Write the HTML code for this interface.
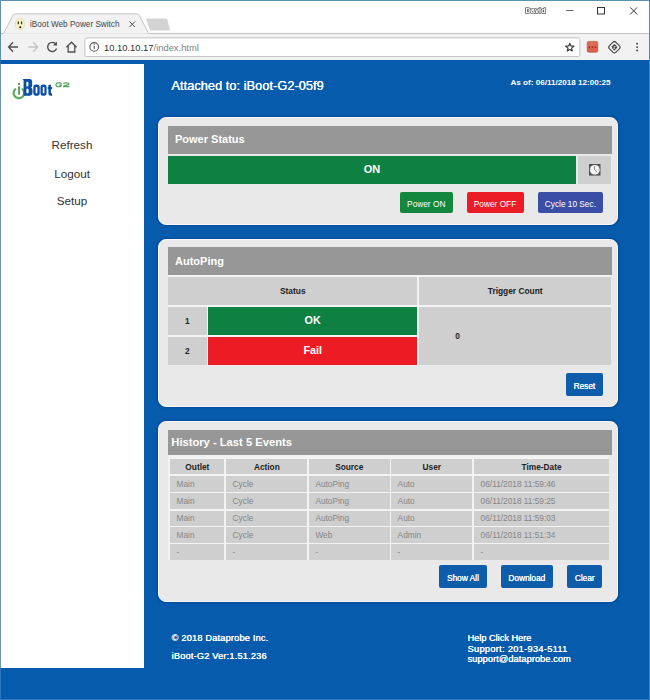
<!DOCTYPE html>
<html><head><meta charset="utf-8"><title>iBoot Web Power Switch</title>
<style>
html,body{margin:0;padding:0;width:650px;height:700px;overflow:hidden;background:#fff;}
body{position:relative;font-family:"Liberation Sans",sans-serif;}
.r{position:absolute;}
.t{position:absolute;white-space:nowrap;line-height:1;}
.emb{text-shadow:0.35px 0 0 currentColor;}
.emb2{text-shadow:0.25px 0 0 currentColor;}
.card{position:absolute;box-sizing:border-box;background:#e9e9ea;border:1.5px solid #f8f8f8;border-radius:8px;box-shadow:0 0 2px 0.5px #004a9c;}
</style></head><body>
<div class="r" style="left:0px;top:0px;width:650.00px;height:33.00px;background:#ffffff;"></div>
<div class="r" style="left:0px;top:33px;width:650.00px;height:27.00px;background:#f2f2f2;"></div>
<div class="r" style="left:0px;top:33px;width:650.00px;height:1.00px;background:#c9c9c9;"></div>
<svg class="r" style="left:0;top:0" width="650" height="60" viewBox="0 0 650 60">
<path d="M3.5 33.5 L13.2 14.8 Q14 13.9 15.5 13.9 L137 13.9 Q138.6 13.9 139.2 14.9 L148.5 33.5" fill="#f2f2f2" stroke="#c6c6c6" stroke-width="1"/>
<rect x="0" y="33.4" width="650" height="0.6" fill="#f2f2f2"/>
<path d="M3.5 33.5 L0 33.5 M148.5 33.5 L650 33.5" stroke="#c3c3c3" stroke-width="1"/>
<path d="M147 18.5 L165 18.5 Q166.5 18.5 167.3 19.6 L170 29.5 Q170.3 30.5 169 30.5 L151.5 30.5 Q150.3 30.5 149.8 29.5 L146.4 19.6 Q146 18.5 147 18.5 Z" fill="#d3d3d3"/>
<!-- favicon -->
<ellipse cx="19.9" cy="24" rx="4.6" ry="5.6" fill="#f6f1c6" stroke="#ddd6a0" stroke-width="0.6"/>
<rect x="17.7" y="21.2" width="1.3" height="3.1" rx="0.6" fill="#3a3a20"/>
<rect x="20.9" y="21.2" width="1.3" height="3.1" rx="0.6" fill="#3a3a20"/>
<circle cx="20.3" cy="27.3" r="1" fill="#111"/>
<!-- tab close -->
<path d="M129.5 21.5 L135 27 M135 21.5 L129.5 27" stroke="#444" stroke-width="0.95"/>
<!-- window controls -->
<path d="M566 10.5 L573.5 10.5" stroke="#666" stroke-width="1"/>
<rect x="597.5" y="7.5" width="7" height="6.5" fill="none" stroke="#333" stroke-width="1"/>
<path d="M630.2 7.4 L637.2 14.4 M637.2 7.4 L630.2 14.4" stroke="#222" stroke-width="0.9"/>
<!-- nav icons -->
<path d="M8.8 47 L18 47 M13 42.2 L8.6 47 L13 51.8" fill="none" stroke="#505050" stroke-width="1.4"/>
<path d="M37.4 47 L28.2 47 M33.2 42.2 L37.6 47 L33.2 51.8" fill="none" stroke="#c4c4c4" stroke-width="1.4"/>
<path d="M56 44.2 A4.6 4.6 0 1 0 56.6 48.6" fill="none" stroke="#505050" stroke-width="1.4"/>
<path d="M57 41.6 L57 45.6 L53 45.6 Z" fill="#505050"/>
<path d="M66.4 47.2 L71.5 42.2 L76.6 47.2 M68.2 45.8 L68.2 52 L74.8 52 L74.8 45.8" fill="none" stroke="#505050" stroke-width="1.3"/>
<!-- address bar -->
<rect x="84.9" y="37.9" width="495" height="18.6" rx="1.5" fill="#fff" stroke="#bdbdbd" stroke-width="0.9"/>
<circle cx="94.2" cy="46.9" r="4.3" fill="none" stroke="#555" stroke-width="1.1"/>
<rect x="93.65" y="45.8" width="1.1" height="3.4" fill="#555"/>
<rect x="93.65" y="43.9" width="1.1" height="1.1" fill="#555"/>
<!-- star -->
<path d="M569.8 43.4 L570.9 46 L573.9 46.2 L571.6 48.1 L572.3 51 L569.8 49.4 L567.3 51 L568 48.1 L565.7 46.2 L568.7 46 Z" fill="none" stroke="#3c3c3c" stroke-width="1.2" stroke-linejoin="round"/>
<!-- red ext -->
<rect x="587.2" y="41.4" width="10.6" height="10.8" rx="1.4" fill="#d8604c" stroke="#b4493a" stroke-width="0.6"/>
<rect x="587.8" y="42" width="9.4" height="3.6" rx="1" fill="#e57a62" opacity="0.55"/>
<circle cx="589.4" cy="47.3" r="0.7" fill="#8a2414"/><circle cx="592.4" cy="47.3" r="0.7" fill="#8a2414"/><circle cx="595.4" cy="47.3" r="0.7" fill="#8a2414"/>
<!-- diamond ext -->
<path d="M612.8 42.3 Q614.4 40.7 616 42.3 L619.3 45.6 Q620.9 47.2 619.3 48.8 L616 52.1 Q614.4 53.7 612.8 52.1 L609.5 48.8 Q607.9 47.2 609.5 45.6 Z" fill="none" stroke="#4a4a4a" stroke-width="1.2"/>
<path d="M611.7 47.2 L614.4 44.5 L616.3 46.4 L614.6 48 M617.1 47.2 L614.4 49.9 L612.5 48 L614.2 46.4" fill="none" stroke="#4a4a4a" stroke-width="1.05" stroke-linejoin="round"/>
<!-- menu dots -->
<circle cx="637.1" cy="43.8" r="0.95" fill="#444"/><circle cx="637.1" cy="47.1" r="0.95" fill="#444"/><circle cx="637.1" cy="50.5" r="0.95" fill="#444"/>
</svg>
<div class="t " style="left:30.00px;top:21.36px;font-size:8.2px;color:#444;">iBoot Web Power Switch</div>
<svg class="r" style="left:520px;top:3px;filter:blur(0.3px)" width="32" height="16" viewBox="520 3 32 16"><text x="535.6" y="13.3" text-anchor="middle" font-family="Liberation Sans" font-weight="bold" font-size="7.4" fill="#fff" stroke="#666" stroke-width="1.7" stroke-linejoin="round" paint-order="stroke">David</text></svg>
<div class="t " style="left:104.00px;top:42.64px;font-size:9.4px;color:#333;">10.10.10.17<span style="color:#808080">/index.html</span></div>
<div class="r" style="left:0px;top:60px;width:650.00px;height:640.00px;background:#065bad;"></div>
<div class="r" style="left:1px;top:64px;width:143.00px;height:604.00px;background:#ffffff;"></div>
<div class="t " style="left:72.00px;top:139.00px;font-size:11.7px;color:#333;transform:translateX(-50%);">Refresh</div>
<div class="t " style="left:72.00px;top:167.70px;font-size:11.7px;color:#333;transform:translateX(-50%);">Logout</div>
<div class="t " style="left:72.00px;top:195.30px;font-size:11.7px;color:#333;transform:translateX(-50%);">Setup</div>
<svg class="r" style="left:0;top:70px" width="80" height="40" viewBox="0 70 80 40">
<path d="M15.9 88.7 A5.3 5.3 0 1 0 21.9 88.7" fill="none" stroke="#5aae60" stroke-width="2.2"/>
<rect x="18.1" y="86.2" width="1.9" height="8.4" fill="#4f9e58"/>
<rect x="18.1" y="83.1" width="1.9" height="1.8" fill="#5b7a60"/>
<path fill-rule="evenodd" fill="#0b4fa2" d="M22.7 79 H29.6 Q32.2 79 32.2 82.2 V85.6 Q32.2 87.1 31.1 87.5 Q32.5 88 32.5 90.2 V92.6 Q32.5 95.7 29.6 95.7 H23.6 V80.3 Q23.6 79.6 22.7 79.6 Z M26.4 81.7 V86.5 H27.6 Q28.4 86.5 28.4 85.7 V82.5 Q28.4 81.7 27.6 81.7 Z M26.4 88.8 V93.2 H27.8 Q28.6 93.2 28.6 92.4 V89.6 Q28.6 88.8 27.8 88.8 Z"/>
<path fill-rule="evenodd" fill="#0b4fa2" d="M35.8 84.6 H37.2 Q39.7 84.6 39.7 87.2 V93.1 Q39.7 95.7 37.2 95.7 H35.8 Q33.3 95.7 33.3 93.1 V87.2 Q33.3 84.6 35.8 84.6 Z M36.1 87 Q35.6 87 35.6 87.6 V92.7 Q35.6 93.3 36.1 93.3 H36.9 Q37.4 93.3 37.4 92.7 V87.6 Q37.4 87 36.9 87 Z"/>
<path fill-rule="evenodd" fill="#0b4fa2" d="M43 84.6 H44.1 Q46.6 84.6 46.6 87.2 V93.1 Q46.6 95.7 44.1 95.7 H43 Q40.5 95.7 40.5 93.1 V87.2 Q40.5 84.6 43 84.6 Z M43.3 87 Q42.8 87 42.8 87.6 V92.7 Q42.8 93.3 43.3 93.3 H43.9 Q44.4 93.3 44.4 92.7 V87.6 Q44.4 87 43.9 87 Z"/>
<path fill="#0b4fa2" d="M48.4 85.1 L50.9 84.6 V87.1 H52.1 V89.2 H50.9 V92.6 Q50.9 93.4 51.6 93.4 H52.1 V95.7 H50.6 Q48.4 95.7 48.4 93.4 V89.2 H47.7 V87.1 H48.4 Z"/>
<path d="M61.35 84.1 Q61.35 82.85 59.5 82.85 H57.9 Q56.05 82.85 56.05 84.4 V85 Q56.05 86.55 57.9 86.55 H59.5 Q61.35 86.55 61.35 85.3 V85.1 H59.1" fill="none" stroke="#55a862" stroke-width="1.3"/>
<path d="M63.65 84.1 Q63.65 82.85 65.5 82.85 H67 Q68.85 82.85 68.85 84 Q68.85 84.9 67 85.2 L65.2 85.5 Q63.65 85.8 63.65 86.55 H69.5" fill="none" stroke="#55a862" stroke-width="1.3"/>
</svg>
<div class="t emb" style="left:171.30px;top:79.85px;font-size:12.7px;color:#fff;letter-spacing:0.08px;">Attached to: iBoot-G2-05f9</div>
<div class="t " style="left:510.50px;top:79.14px;font-size:8.1px;color:#fff;font-weight:bold;">As of: 06/11/2018 12:00:25</div>
<div class="card" style="left:158px;top:117px;width:460px;height:108px;"></div>
<div class="r" style="left:168px;top:126px;width:444.00px;height:27.50px;background:#979797;"></div>
<div class="t " style="left:175.00px;top:134.29px;font-size:11px;color:#fff;font-weight:bold;">Power Status</div>
<div class="r" style="left:168px;top:156px;width:408.00px;height:28.00px;background:#0e8041;"></div>
<div class="t " style="left:372.00px;top:163.69px;font-size:11px;color:#fff;font-weight:bold;transform:translateX(-50%);">ON</div>
<div class="r" style="left:578px;top:156px;width:33.00px;height:28.00px;background:#cfcfcf;"></div>
<svg class="r" style="left:588.5px;top:164px" width="12" height="12" viewBox="0 0 12 12">
<rect x="0" y="0" width="11.5" height="11.6" fill="#555"/>
<circle cx="5.8" cy="5.8" r="4.9" fill="#f6f6f6"/>
<path d="M5.8 1.8 V2.8 M5.8 8.8 V9.8 M1.8 5.8 H2.8 M8.8 5.8 H9.8" stroke="#999" stroke-width="0.6"/>
<path d="M5.3 2.4 L5.6 5.9 L8 7.8" fill="none" stroke="#666" stroke-width="0.75"/>
</svg>
<div class="r" style="left:400px;top:192px;width:52.50px;height:21.00px;background:#13873f;border-radius:2px;"></div>
<div class="t " style="left:426.25px;top:199.97px;font-size:8.3px;color:#fff;transform:translateX(-50%);">Power ON</div>
<div class="r" style="left:466.5px;top:192px;width:57.10px;height:21.00px;background:#ec1c26;border-radius:2px;"></div>
<div class="t " style="left:495.05px;top:199.97px;font-size:8.3px;color:#fff;transform:translateX(-50%);">Power OFF</div>
<div class="r" style="left:537.6px;top:192px;width:65.50px;height:21.00px;background:#3a4ea6;border-radius:2px;"></div>
<div class="t " style="left:570.35px;top:199.97px;font-size:8.3px;color:#fff;transform:translateX(-50%);">Cycle 10 Sec.</div>
<div class="card" style="left:158px;top:238.5px;width:460px;height:168.5px;"></div>
<div class="r" style="left:168px;top:247px;width:444.00px;height:28.30px;background:#979797;"></div>
<div class="t " style="left:175.00px;top:255.89px;font-size:11px;color:#fff;font-weight:bold;">AutoPing</div>
<div class="r" style="left:168px;top:275.3px;width:443.00px;height:89.70px;background:#f3f3f3;"></div>
<div class="r" style="left:168px;top:277px;width:249.30px;height:28.30px;background:#cfcfcf;"></div>
<div class="r" style="left:419px;top:277px;width:192.00px;height:28.30px;background:#cfcfcf;"></div>
<div class="t " style="left:292.80px;top:287.19px;font-size:8.4px;color:#222;font-weight:bold;transform:translateX(-50%);">Status</div>
<div class="t " style="left:515.20px;top:287.19px;font-size:8.4px;color:#222;font-weight:bold;transform:translateX(-50%);">Trigger Count</div>
<div class="r" style="left:168px;top:307px;width:39.00px;height:27.80px;background:#cfcfcf;"></div>
<div class="r" style="left:208px;top:307px;width:209.30px;height:27.80px;background:#0e8041;"></div>
<div class="r" style="left:168px;top:336.8px;width:39.00px;height:28.00px;background:#cfcfcf;"></div>
<div class="r" style="left:208px;top:336.8px;width:209.30px;height:28.00px;background:#ed1c24;"></div>
<div class="r" style="left:419px;top:307px;width:192.00px;height:57.80px;background:#cfcfcf;"></div>
<div class="t " style="left:187.30px;top:316.97px;font-size:8.3px;color:#222;font-weight:bold;transform:translateX(-50%);">1</div>
<div class="t " style="left:187.30px;top:346.87px;font-size:8.3px;color:#222;font-weight:bold;transform:translateX(-50%);">2</div>
<div class="t " style="left:312.70px;top:315.46px;font-size:10.8px;color:#fff;font-weight:bold;transform:translateX(-50%);">OK</div>
<div class="t " style="left:312.70px;top:344.86px;font-size:10.8px;color:#fff;font-weight:bold;transform:translateX(-50%);">Fail</div>
<div class="t " style="left:457.60px;top:331.97px;font-size:8.3px;color:#222;font-weight:bold;transform:translateX(-50%);">0</div>
<div class="r" style="left:565.5px;top:373px;width:37.60px;height:22.80px;background:#0d5dab;border-radius:2px;"></div>
<div class="t emb2" style="left:584.30px;top:381.77px;font-size:8.3px;color:#fff;transform:translateX(-50%);">Reset</div>
<div class="card" style="left:158px;top:421px;width:460px;height:180.79999999999995px;"></div>
<div class="r" style="left:168px;top:430px;width:444.00px;height:25.20px;background:#979797;"></div>
<div class="t " style="left:171.30px;top:436.92px;font-size:11.2px;color:#fff;font-weight:bold;">History - Last 5 Events</div>
<div class="r" style="left:168px;top:455.2px;width:441.00px;height:104.60px;background:#f3f3f3;"></div>
<div class="r" style="left:170.2px;top:458.6px;width:54.30px;height:15.50px;background:#cfcfcf;"></div>
<div class="t " style="left:197.35px;top:462.77px;font-size:8.3px;color:#222;font-weight:bold;transform:translateX(-50%);">Outlet</div>
<div class="r" style="left:226.2px;top:458.6px;width:81.30px;height:15.50px;background:#cfcfcf;"></div>
<div class="t " style="left:266.85px;top:462.77px;font-size:8.3px;color:#222;font-weight:bold;transform:translateX(-50%);">Action</div>
<div class="r" style="left:309px;top:458.6px;width:80.50px;height:15.50px;background:#cfcfcf;"></div>
<div class="t " style="left:349.25px;top:462.77px;font-size:8.3px;color:#222;font-weight:bold;transform:translateX(-50%);">Source</div>
<div class="r" style="left:391.2px;top:458.6px;width:81.30px;height:15.50px;background:#cfcfcf;"></div>
<div class="t " style="left:431.85px;top:462.77px;font-size:8.3px;color:#222;font-weight:bold;transform:translateX(-50%);">User</div>
<div class="r" style="left:474.2px;top:458.6px;width:134.80px;height:15.50px;background:#cfcfcf;"></div>
<div class="t " style="left:541.60px;top:462.77px;font-size:8.3px;color:#222;font-weight:bold;transform:translateX(-50%);">Time-Date</div>
<div class="r" style="left:170.2px;top:476.1px;width:54.30px;height:15.50px;background:#cfcfcf;"></div>
<div class="t " style="left:176.60px;top:479.87px;font-size:8.3px;color:#858585;">Main</div>
<div class="r" style="left:226.2px;top:476.1px;width:81.30px;height:15.50px;background:#cfcfcf;"></div>
<div class="t " style="left:232.60px;top:479.87px;font-size:8.3px;color:#858585;">Cycle</div>
<div class="r" style="left:309px;top:476.1px;width:80.50px;height:15.50px;background:#cfcfcf;"></div>
<div class="t " style="left:315.40px;top:479.87px;font-size:8.3px;color:#858585;">AutoPing</div>
<div class="r" style="left:391.2px;top:476.1px;width:81.30px;height:15.50px;background:#cfcfcf;"></div>
<div class="t " style="left:397.60px;top:479.87px;font-size:8.3px;color:#858585;">Auto</div>
<div class="r" style="left:474.2px;top:476.1px;width:134.80px;height:15.50px;background:#cfcfcf;"></div>
<div class="t " style="left:480.60px;top:479.87px;font-size:8.3px;color:#858585;">06/11/2018 11:59:46</div>
<div class="r" style="left:170.2px;top:493.2px;width:54.30px;height:15.50px;background:#cfcfcf;"></div>
<div class="t " style="left:176.60px;top:496.97px;font-size:8.3px;color:#858585;">Main</div>
<div class="r" style="left:226.2px;top:493.2px;width:81.30px;height:15.50px;background:#cfcfcf;"></div>
<div class="t " style="left:232.60px;top:496.97px;font-size:8.3px;color:#858585;">Cycle</div>
<div class="r" style="left:309px;top:493.2px;width:80.50px;height:15.50px;background:#cfcfcf;"></div>
<div class="t " style="left:315.40px;top:496.97px;font-size:8.3px;color:#858585;">AutoPing</div>
<div class="r" style="left:391.2px;top:493.2px;width:81.30px;height:15.50px;background:#cfcfcf;"></div>
<div class="t " style="left:397.60px;top:496.97px;font-size:8.3px;color:#858585;">Auto</div>
<div class="r" style="left:474.2px;top:493.2px;width:134.80px;height:15.50px;background:#cfcfcf;"></div>
<div class="t " style="left:480.60px;top:496.97px;font-size:8.3px;color:#858585;">06/11/2018 11:59:25</div>
<div class="r" style="left:170.2px;top:510.5px;width:54.30px;height:15.50px;background:#cfcfcf;"></div>
<div class="t " style="left:176.60px;top:514.27px;font-size:8.3px;color:#858585;">Main</div>
<div class="r" style="left:226.2px;top:510.5px;width:81.30px;height:15.50px;background:#cfcfcf;"></div>
<div class="t " style="left:232.60px;top:514.27px;font-size:8.3px;color:#858585;">Cycle</div>
<div class="r" style="left:309px;top:510.5px;width:80.50px;height:15.50px;background:#cfcfcf;"></div>
<div class="t " style="left:315.40px;top:514.27px;font-size:8.3px;color:#858585;">AutoPing</div>
<div class="r" style="left:391.2px;top:510.5px;width:81.30px;height:15.50px;background:#cfcfcf;"></div>
<div class="t " style="left:397.60px;top:514.27px;font-size:8.3px;color:#858585;">Auto</div>
<div class="r" style="left:474.2px;top:510.5px;width:134.80px;height:15.50px;background:#cfcfcf;"></div>
<div class="t " style="left:480.60px;top:514.27px;font-size:8.3px;color:#858585;">06/11/2018 11:59:03</div>
<div class="r" style="left:170.2px;top:527.2px;width:54.30px;height:15.50px;background:#cfcfcf;"></div>
<div class="t " style="left:176.60px;top:530.97px;font-size:8.3px;color:#858585;">Main</div>
<div class="r" style="left:226.2px;top:527.2px;width:81.30px;height:15.50px;background:#cfcfcf;"></div>
<div class="t " style="left:232.60px;top:530.97px;font-size:8.3px;color:#858585;">Cycle</div>
<div class="r" style="left:309px;top:527.2px;width:80.50px;height:15.50px;background:#cfcfcf;"></div>
<div class="t " style="left:315.40px;top:530.97px;font-size:8.3px;color:#858585;">Web</div>
<div class="r" style="left:391.2px;top:527.2px;width:81.30px;height:15.50px;background:#cfcfcf;"></div>
<div class="t " style="left:397.60px;top:530.97px;font-size:8.3px;color:#858585;">Admin</div>
<div class="r" style="left:474.2px;top:527.2px;width:134.80px;height:15.50px;background:#cfcfcf;"></div>
<div class="t " style="left:480.60px;top:530.97px;font-size:8.3px;color:#858585;">06/11/2018 11:51:34</div>
<div class="r" style="left:170.2px;top:544.3px;width:54.30px;height:15.50px;background:#cfcfcf;"></div>
<div class="t " style="left:176.60px;top:548.07px;font-size:8.3px;color:#858585;">-</div>
<div class="r" style="left:226.2px;top:544.3px;width:81.30px;height:15.50px;background:#cfcfcf;"></div>
<div class="t " style="left:232.60px;top:548.07px;font-size:8.3px;color:#858585;">-</div>
<div class="r" style="left:309px;top:544.3px;width:80.50px;height:15.50px;background:#cfcfcf;"></div>
<div class="t " style="left:315.40px;top:548.07px;font-size:8.3px;color:#858585;">-</div>
<div class="r" style="left:391.2px;top:544.3px;width:81.30px;height:15.50px;background:#cfcfcf;"></div>
<div class="t " style="left:397.60px;top:548.07px;font-size:8.3px;color:#858585;">-</div>
<div class="r" style="left:474.2px;top:544.3px;width:134.80px;height:15.50px;background:#cfcfcf;"></div>
<div class="t " style="left:480.60px;top:548.07px;font-size:8.3px;color:#858585;">-</div>
<div class="r" style="left:438.9px;top:565px;width:48.00px;height:22.60px;background:#0d5dab;border-radius:2px;"></div>
<div class="t emb2" style="left:462.90px;top:573.77px;font-size:8.3px;color:#fff;transform:translateX(-50%);">Show All</div>
<div class="r" style="left:500.8px;top:565px;width:51.90px;height:22.60px;background:#0d5dab;border-radius:2px;"></div>
<div class="t emb2" style="left:526.75px;top:573.77px;font-size:8.3px;color:#fff;transform:translateX(-50%);">Download</div>
<div class="r" style="left:567.1px;top:565px;width:35.00px;height:22.60px;background:#0d5dab;border-radius:2px;"></div>
<div class="t emb2" style="left:584.60px;top:573.77px;font-size:8.3px;color:#fff;transform:translateX(-50%);">Clear</div>
<div class="t emb" style="left:171.50px;top:634.21px;font-size:9.2px;color:#fff;letter-spacing:0.2px;">&copy; 2018 Dataprobe Inc.</div>
<div class="t emb" style="left:171.50px;top:651.81px;font-size:9.2px;color:#fff;letter-spacing:0.2px;">iBoot-G2 Ver:1.51.236</div>
<div class="t emb" style="left:467.40px;top:633.81px;font-size:9.2px;color:#fff;letter-spacing:0.0px;">Help Click Here</div>
<div class="t emb" style="left:467.40px;top:644.81px;font-size:9.2px;color:#fff;letter-spacing:0.33px;">Support: 201-934-5111</div>
<div class="t emb" style="left:467.40px;top:654.91px;font-size:9.2px;color:#fff;letter-spacing:0.1px;">support@dataprobe.com</div>
<div class="r" style="left:0px;top:0px;width:650.00px;height:1.00px;background:#5f8fae;"></div>
<div class="r" style="left:0px;top:0px;width:1.00px;height:60.00px;background:#5f8fae;"></div>
<div class="r" style="left:0px;top:60px;width:1.00px;height:4.00px;background:#2c70b5;"></div>
<div class="r" style="left:0px;top:64px;width:1.00px;height:604.00px;background:#6b93b0;"></div>
<div class="r" style="left:0px;top:668px;width:1.00px;height:32.00px;background:#2c74bd;"></div>
<div class="r" style="left:649px;top:0px;width:1.00px;height:700.00px;background:#3d8bd0;"></div>
<div class="r" style="left:0px;top:699px;width:650.00px;height:1.00px;background:#2f74bc;"></div>
</body></html>
